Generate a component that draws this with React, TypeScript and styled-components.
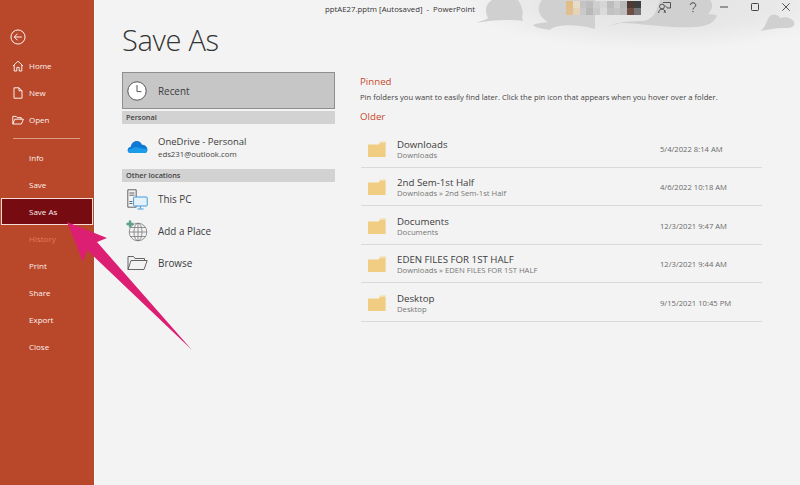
import React from "react";
import styled, { createGlobalStyle } from "styled-components";

const GlobalStyle = createGlobalStyle`
  html, body {
    margin: 0;
    padding: 0;
    width: 800px;
    height: 485px;
    overflow: hidden;
    background: #f3f3f3;
  }
  * {
    box-sizing: border-box;
  }
`;

type FolderEntry = {
  name: string;
  path: string;
  date: string;
};

const folders: FolderEntry[] = [
  { name: "Downloads", path: "Downloads", date: "5/4/2022 8:14 AM" },
  { name: "2nd Sem-1st Half", path: "Downloads » 2nd Sem-1st Half", date: "4/6/2022 10:18 AM" },
  { name: "Documents", path: "Documents", date: "12/3/2021 9:47 AM" },
  { name: "EDEN FILES FOR 1ST HALF", path: "Downloads » EDEN FILES FOR 1ST HALF", date: "12/3/2021 9:44 AM" },
  { name: "Desktop", path: "Desktop", date: "9/15/2021 10:45 PM" },
];

const mosaicColors = [
  "#e2bd88", "#e6dcc8", "#c4c4c4", "#bdbdbd", "#cfcfcf", "#d6d6d6", "#bcbcbc", "#cdcdcd", "#b9b9b9", "#4e3a34", "#3f3f3f",
  "#e0c08e", "#e4d3b6", "#c9c9c9", "#b8b8b8", "#cacaca", "#dadada", "#c2c2c2", "#c6c6c6", "#bdbdbd", "#6f4f45", "#757575",
];

const HomeIcon = () => (
  <svg width="12" height="12" viewBox="0 0 12 12" fill="none" stroke="#fff" strokeWidth="0.9">
    <path d="M1 6 6 1.2 11 6M2.2 5v6h2.6V7.4h2.4V11h2.6V5" />
  </svg>
);

const NewIcon = () => (
  <svg width="12" height="12" viewBox="0 0 12 12" fill="none" stroke="#fff" strokeWidth="0.9">
    <path d="M2 .8h5l3 3v7.4H2zM7 .8v3h3" />
  </svg>
);

const OpenIcon = () => (
  <svg width="12" height="12" viewBox="0 0 12 12" fill="none" stroke="#fff" strokeWidth="0.9">
    <path d="M.8 10V2.4h3.4l1 1.2h4v1.6M.8 10l2-4.8H11.4L9.4 10z" />
  </svg>
);

const ClockIcon = () => (
  <svg width="20" height="20" viewBox="0 0 20 20" fill="#fff" stroke="#555" strokeWidth="1">
    <circle cx="10" cy="10" r="9.2" />
    <path d="M10 4v6.600h4.400" fill="none" />
  </svg>
);

const CloudIcon = () => (
  <svg width="21" height="14" viewBox="0 0 22 15">
    <path d="M4 14C1.6 14 .4 12.4.5 10.6.6 8.8 2 7.6 3.6 7.6 4.4 4 6.8 1.2 10.200 1.2c2.600 0 4.800 1.600 5.600 4 2.800-.2 5.400 1.800 5.800 4.400.3 2.400-1 4.400-3.200 4.400z" fill="#0f78d4" />
    <path d="M4 14c-2 0-3.500-1.300-3.500-3.200L9 7.500l12.400 2.400c.5 2.200-.8 4.100-3 4.100z" fill="#1c9be8" />
  </svg>
);

const PcIcon = () => (
  <svg width="21" height="21" viewBox="0 0 21 21" fill="none">
    <path d="M.8.800h8.400v17.400H.8zM2.400 4h5M2.400 6.200h5M2.400 12.500h3M2.400 14.500h3" stroke="#555" strokeWidth=".9" />
    <rect x="6.600" y="8" width="13.600" height="9" rx=".8" fill="#e6f2fb" stroke="#3f9bdc" strokeWidth="1" />
    <path d="M13.400 17v2.500M10.500 20h6" stroke="#3f9bdc" strokeWidth="1" />
  </svg>
);

const GlobeIcon = () => (
  <svg width="22" height="22" viewBox="0 0 22 22" fill="none">
    <g stroke="#7a7a7a" strokeWidth=".8">
      <circle cx="12" cy="12" r="8.800" />
      <ellipse cx="12" cy="12" rx="4" ry="8.800" />
      <path d="M3.200 12h17.600M4.500 7.500h15M4.500 16.500h15M12 3.200v17.600" />
    </g>
    <path d="M4 .5v7M.5 4h7" stroke="#5ba08c" strokeWidth="2.400" />
  </svg>
);

const BrowseIcon = () => (
  <svg width="21" height="16" viewBox="0 0 21 16" fill="none" stroke="#555" strokeWidth=".9">
    <path d="M1 14.500V1.500h5.500L8 3.500h9.500v2M1 14.500 4 5.500h16.200L17 14.500z" />
  </svg>
);

const FolderIcon = () => (
  <svg width="18" height="16" viewBox="0 0 18 16">
    <path d="M0 3.500 11 3.500 11 1 17.600 0V16H0z" fill="#f1cd83" />
    <path d="M11 3.300 11.300 1 17.600 .3V1.600H12.400z" fill="#f8f1e2" />
  </svg>
);

const Page = styled.div`
  position: relative;
  display: flex;
  width: 800px;
  height: 485px;
  overflow: hidden;
  font-family: "Open Sans", "Noto Sans", sans-serif;
  background: #f3f3f3;
`;

const Sidebar = styled.aside`
  flex: 0 0 95px;
  height: 485px;
  padding-top: 27px;
  background: #b9472a;
  border-right: 1px solid #fafafa;
`;

const BackButton = styled.div`
  height: 18px;
  padding: 1px 0 0 10px;
  margin-bottom: 7px;
`;

const NavItem = styled.div<{ $active?: boolean; $disabled?: boolean }>`
  position: relative;
  display: flex;
  align-items: center;
  height: 27px;
  margin: 0 ${({ $active }) => ($active ? "1px" : "0")};
  padding-left: ${({ $active }) => ($active ? "27px" : "29px")};
  font-size: 8px;
  color: ${({ $disabled }) => ($disabled ? "#e07a5f" : "#fbf1ed")};
  background: ${({ $active }) => ($active ? "#760b12" : "transparent")};
  border: ${({ $active }) => ($active ? "1px solid #f3dcd5" : "none")};
`;

const NavIcon = styled.span`
  position: absolute;
  left: 12px;
  top: 8px;
  display: flex;
`;

const NavDivider = styled.div`
  height: 1px;
  margin: 5px 14px 5px 13px;
  background: #de9a84;
`;

const Main = styled.main`
  flex: 1;
  min-width: 0;
  position: relative;
`;

const TitleBar = styled.header`
  position: relative;
  display: flex;
  align-items: flex-start;
  height: 22px;
  padding-left: 230px;
`;

const Clouds = styled.svg`
  position: absolute;
  top: 0;
  right: 0;
`;

const WindowTitle = styled.div`
  position: relative;
  margin-top: 3px;
  font-size: 7.800px;
  line-height: 12px;
  color: #333;
  white-space: nowrap;
`;

const Mosaic = styled.div`
  position: absolute;
  left: 471px;
  top: 1px;
  display: grid;
  grid-template-columns: repeat(9, 6.8px) repeat(2, 7px);
  grid-auto-rows: 7px;
`;

const MosaicCell = styled.i<{ $color: string }>`
  display: block;
  background: ${({ $color }) => $color};
`;

const WindowControls = styled.div`
  position: absolute;
  top: 0;
  right: -1px;
  display: flex;
`;

const ControlButton = styled.div<{ $width: number }>`
  display: flex;
  align-items: center;
  justify-content: center;
  width: ${({ $width }) => $width}px;
  height: 14px;
  color: #444;
`;

const Heading = styled.h1`
  margin: 0 0 14px 27px;
  height: 36px;
  font-size: 29px;
  line-height: 36px;
  font-weight: 300;
  letter-spacing: -0.3px;
  color: #333;
`;

const Columns = styled.div`
  display: flex;
  padding-left: 27px;
`;

const LocationColumn = styled.section`
  flex: 0 0 213px;
`;

const RecentRow = styled.div`
  display: flex;
  align-items: center;
  gap: 11px;
  height: 37px;
  padding-left: 4px;
  margin-bottom: 2px;
  font-size: 9.900px;
  color: #3c3c3c;
  background: #c6c6c6;
  border: 1px solid #8f8f8f;
`;

const SectionLabel = styled.div`
  height: 13px;
  margin-bottom: 1px;
  padding-left: 4px;
  font-size: 7.300px;
  line-height: 13px;
  font-weight: 600;
  color: #444;
  background: #d2d2d2;
`;

const AccountRow = styled.div`
  display: flex;
  align-items: center;
  height: 44px;
  padding-left: 4px;
`;

const IconSlot = styled.div`
  display: flex;
  justify-content: center;
  flex: 0 0 22px;
  margin-right: 10px;
`;

const AccountName = styled.div`
  font-size: 9.500px;
  line-height: 14px;
  color: #3c3c3c;
  white-space: nowrap;
`;

const AccountMail = styled.div`
  font-size: 7.800px;
  line-height: 11px;
  color: #444;
`;

const PlaceRow = styled.div`
  display: flex;
  align-items: center;
  height: 32px;
  padding-left: 4px;
  font-size: 9.900px;
  color: #3c3c3c;
`;

const RecentColumn = styled.section`
  flex: 0 0 402px;
  margin-left: 25px;
  padding-top: 3px;
`;

const GroupTitle = styled.div`
  height: 14px;
  font-size: 9.700px;
  line-height: 14px;
  color: #c5492d;
`;

const Hint = styled.p`
  margin: 2px 0 6px;
  height: 13px;
  font-size: 7.650px;
  line-height: 13px;
  color: #444;
  white-space: nowrap;
`;

const FolderList = styled.div`
  margin: 5px 0 0 1px;
`;

const FolderRow = styled.div`
  display: flex;
  align-items: center;
  height: 38.500px;
  padding: 2px 0 0 7px;
  border-bottom: 1px solid #d9d9d9;
`;

const FolderText = styled.div`
  flex: 0 0 263px;
  margin: 1px 0 0 11px;
`;

const FolderName = styled.div`
  font-size: 9.700px;
  line-height: 13px;
  color: #3c3c3c;
  white-space: nowrap;
`;

const FolderPath = styled.div`
  margin-top: -1px;
  font-size: 7.700px;
  line-height: 11px;
  color: #777;
  white-space: nowrap;
`;

const FolderDate = styled.div`
  font-size: 7.650px;
  color: #6a6a6a;
  white-space: nowrap;
`;

const PointerArrow = styled.svg`
  position: absolute;
  left: 60px;
  top: 215px;
`;

const navTop = [
  { label: "Home", icon: <HomeIcon /> },
  { label: "New", icon: <NewIcon /> },
  { label: "Open", icon: <OpenIcon /> },
];

const navBottom = ["Info", "Save", "Save As", "History", "Print", "Share", "Export", "Close"];

export default function App() {
  return (
    <>
      <GlobalStyle />
      <Page>
        <Sidebar>
          <BackButton>
            <svg width="16" height="16" viewBox="0 0 17 17" fill="none" stroke="#fff" strokeWidth="1">
              <circle cx="8.500" cy="8.500" r="7.500" />
              <path d="M12.500 8.500H4.500M8 5 4.500 8.500 8 12" />
            </svg>
          </BackButton>
          {navTop.map((item) => (
            <NavItem key={item.label}>
              <NavIcon>{item.icon}</NavIcon>
              {item.label}
            </NavItem>
          ))}
          <NavDivider />
          {navBottom.map((label) => (
            <NavItem key={label} $active={label === "Save As"} $disabled={label === "History"}>
              {label}
            </NavItem>
          ))}
        </Sidebar>
        <Main>
          <TitleBar>
            <Clouds width="345" height="56" viewBox="0 0 345 56">
              <defs>
                <radialGradient id="haze">
                  <stop offset="0" stopColor="#e2e2e2" />
                  <stop offset="0.6" stopColor="#e8e8e8" />
                  <stop offset="1" stopColor="#f3f3f3" />
                </radialGradient>
              </defs>
              <ellipse cx="200" cy="0" rx="200" ry="50" fill="url(#haze)" />
              <g fill="#d0d0d0">
                <path d="M22 23C27 20 31 20 33 18 29 10 31 4 37 0H63C67 6 69 12 67 17L68 21C55 19 35 20 22 23Z" />
                <path d="M78 25C85 22 91 23 93 22 83 16 81 8 87 0H140V29C123 24 100 24 95 30 89 29 81 28 78 25Z" />
                <path d="M155 26C161 22 175 21 187 21 197 20 201 14 205 0H255C259 5 257 10 253 14L262 15C261 22 251 27 240 27 215 29 180 22 165 23Z" />
                <path d="M305 31C311 28 311 20 315 16 319 13 323 15 325 18 331 16 337 18 339 22 341 28 333 28 329 28 319 28 311 30 305 31Z" />
              </g>
            </Clouds>
            <WindowTitle>pptAE27.pptm [Autosaved]&nbsp; -&nbsp; PowerPoint</WindowTitle>
            <Mosaic>
              {mosaicColors.map((color, i) => (
                <MosaicCell key={i} $color={color} />
              ))}
            </Mosaic>
            <WindowControls>
              <ControlButton $width={26}>
                <svg width="13" height="13" viewBox="0 0 13 13" fill="none" stroke="#444" strokeWidth=".9">
                  <path d="M5 1.500h7.500v5.500H9M6 11.500 7 9M9.500 7 7 4.500" />
                  <circle cx="4" cy="5.500" r="2.400" />
                  <path d="M.6 12c.2-2.500 1.600-3.800 3.400-3.800S7.200 9.500 7.400 12" />
                </svg>
              </ControlButton>
              <ControlButton $width={31}>
                <svg width="8" height="11" viewBox="0 0 8 11" fill="none" stroke="#444" strokeWidth="1">
                  <path d="M1.200 3C1.400 1.500 2.500.8 4 .8c1.600 0 2.800 1 2.800 2.400C6.800 5.200 4 5.300 4 7.500M4 9v1.200" />
                </svg>
              </ControlButton>
              <ControlButton $width={31}>
                <svg width="8" height="2" viewBox="0 0 8 2" stroke="#444" strokeWidth="1">
                  <path d="M0 1h8" />
                </svg>
              </ControlButton>
              <ControlButton $width={31}>
                <svg width="8" height="8" viewBox="0 0 8 8" fill="none" stroke="#444" strokeWidth="1">
                  <rect x=".5" y=".5" width="7" height="7" rx=".8" />
                </svg>
              </ControlButton>
              <ControlButton $width={31}>
                <svg width="8" height="8" viewBox="0 0 8 8" fill="none" stroke="#444" strokeWidth=".9">
                  <path d="M.3.300 7.700 7.700M7.700.300.3 7.700" />
                </svg>
              </ControlButton>
            </WindowControls>
          </TitleBar>
          <Heading>Save As</Heading>
          <Columns>
            <LocationColumn>
              <RecentRow>
                <ClockIcon />
                Recent
              </RecentRow>
              <SectionLabel>Personal</SectionLabel>
              <AccountRow>
                <IconSlot>
                  <CloudIcon />
                </IconSlot>
                <div>
                  <AccountName>OneDrive - Personal</AccountName>
                  <AccountMail>eds231@outlook.com</AccountMail>
                </div>
              </AccountRow>
              <SectionLabel>Other locations</SectionLabel>
              <PlaceRow>
                <IconSlot>
                  <PcIcon />
                </IconSlot>
                This PC
              </PlaceRow>
              <PlaceRow>
                <IconSlot>
                  <GlobeIcon />
                </IconSlot>
                Add a Place
              </PlaceRow>
              <PlaceRow>
                <IconSlot>
                  <BrowseIcon />
                </IconSlot>
                Browse
              </PlaceRow>
            </LocationColumn>
            <RecentColumn>
              <GroupTitle>Pinned</GroupTitle>
              <Hint>Pin folders you want to easily find later. Click the pin icon that appears when you hover over a folder.</Hint>
              <GroupTitle>Older</GroupTitle>
              <FolderList>
                {folders.map((folder) => (
                  <FolderRow key={folder.name}>
                    <FolderIcon />
                    <FolderText>
                      <FolderName>{folder.name}</FolderName>
                      <FolderPath>{folder.path}</FolderPath>
                    </FolderText>
                    <FolderDate>{folder.date}</FolderDate>
                  </FolderRow>
                ))}
              </FolderList>
            </RecentColumn>
          </Columns>
        </Main>
        <PointerArrow width="140" height="140" viewBox="60 215 140 140">
          <path d="M67 222 107 238 97 242 192 350 87 250 83 262Z" fill="#dd1f74" />
        </PointerArrow>
      </Page>
    </>
  );
}
